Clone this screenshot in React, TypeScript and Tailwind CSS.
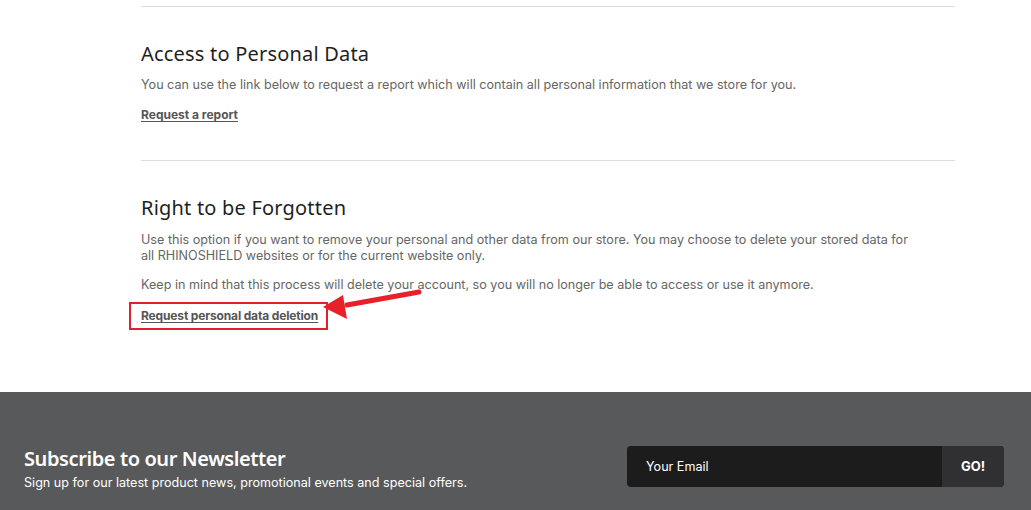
import React from "react";

export default function App() {
  return (
    <div className="w-[1031px] h-[510px] overflow-hidden bg-white" style={{ fontFamily: "Inter, 'Liberation Sans', sans-serif" }}>
      <div className="h-[392px] pl-[141px] pr-[76px]">
        <div className="pt-[6px]">
          <div className="h-px bg-[#dcdcdc]" />
        </div>
        <section className="pt-[34px]">
          <h2 className="text-[20px] leading-[26px] text-[#1f1f1f] font-normal tracking-[0.2px]" style={{ fontFamily: "'Noto Sans', Inter, sans-serif" }}>
            Access to Personal Data
          </h2>
          <p className="mt-[10px] text-[12.6px] leading-[16px] text-[#666666]">
            You can use the link below to request a report which will contain all personal information that we store for you.
          </p>
          <a className="block mt-[14px] text-[12px] leading-[16px] font-bold text-[#555555] underline underline-offset-2">
            Request a report
          </a>
        </section>
        <div className="mt-[37px] h-px bg-[#dcdcdc]" />
        <section className="pt-[34px]">
          <h2 className="text-[20px] leading-[26px] text-[#1f1f1f] font-normal tracking-[0.2px]" style={{ fontFamily: "'Noto Sans', Inter, sans-serif" }}>
            Right to be Forgotten
          </h2>
          <p className="mt-[11px] w-[780px] text-[12.6px] leading-[16px] text-[#666666]">
            Use this option if you want to remove your personal and other data from our store. You may choose to delete your stored data for all RHINOSHIELD websites or for the current website only.
          </p>
          <p className="mt-[13px] text-[12.6px] leading-[16px] text-[#666666]">
            Keep in mind that this process will delete your account, so you will no longer be able to access or use it anymore.
          </p>
          <div className="relative mt-[15px] h-[16px]">
            <a className="block text-[12px] leading-[16px] font-bold text-[#555555] underline underline-offset-2 tracking-[-0.15px]">
              Request personal data deletion
            </a>
            <div className="absolute left-[-12px] top-[-6px] w-[199px] h-[28px] border-2 border-[#e0202a]" />
            <svg className="absolute left-[178px] top-[-20px]" width="104" height="40" viewBox="0 0 104 40">
              <path d="M100 4 L28 17" stroke="#e8202a" strokeWidth="5" strokeLinecap="round" />
              <polygon points="4,19 24,7 28,31" fill="#e8202a" />
            </svg>
          </div>
        </section>
      </div>
      <footer className="h-[118px] bg-[#58595b] px-[24px] flex items-start justify-between">
        <div className="pt-[55px]">
          <h3 className="text-[20px] leading-[24px] font-semibold text-white tracking-[-0.4px]" style={{ fontFamily: "'Noto Sans', Inter, sans-serif" }}>
            Subscribe to our Newsletter
          </h3>
          <p className="mt-[3px] text-[12.6px] leading-[18px] text-white">
            Sign up for our latest product news, promotional events and special offers.
          </p>
        </div>
        <div className="mt-[54px] mr-[3px] flex w-[377px] h-[41px] rounded-[4px] overflow-hidden bg-[#1c1c1c]">
          <div className="flex-1 flex items-center pl-[19px] pt-[2px] text-[12.6px] text-white">Your Email</div>
          <div className="w-[62px] flex items-center justify-center bg-[#303032] text-[13px] font-bold text-white">GO!</div>
        </div>
      </footer>
    </div>
  );
}
